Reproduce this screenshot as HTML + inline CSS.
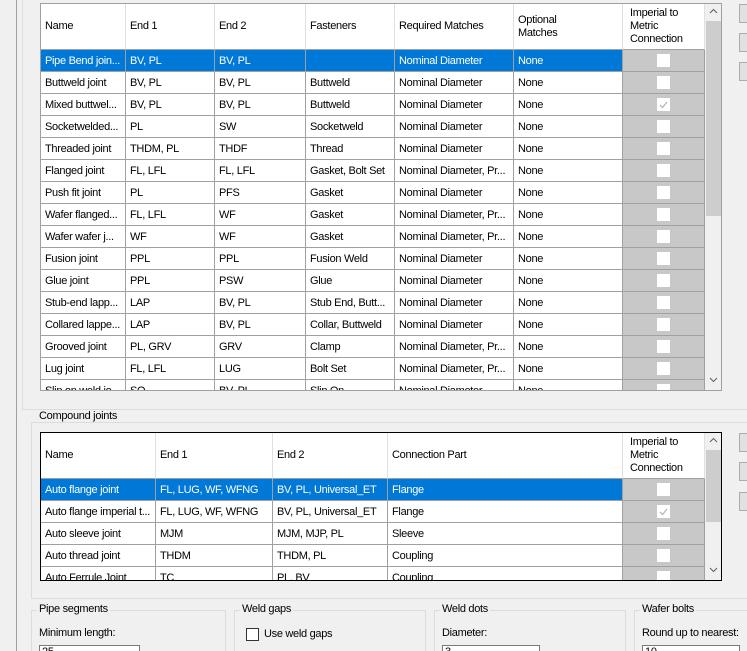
<!DOCTYPE html>
<html><head><meta charset="utf-8"><style>
*{margin:0;padding:0;box-sizing:border-box}
html,body{width:747px;height:651px;overflow:hidden}
body{background:#f0f0f0;font-family:"Liberation Sans",sans-serif;font-size:11px;letter-spacing:-0.3px;color:#000;position:relative}
.a{position:absolute;white-space:nowrap}
.grid{position:absolute;background:#fff;overflow:hidden}
.c{position:absolute;border-right:1px solid #a0a0a0;border-bottom:1px solid #a0a0a0;padding-left:4px;white-space:nowrap;overflow:hidden;display:flex;align-items:center}
.h{border-color:#e0e0e0;border-bottom:1px solid #a0a0a0}
.sel{background:#0078d7;color:#fff}
.g{background:#c8c8c8;justify-content:center;padding:0}
.cb{width:13px;height:13px;background:#fff}
.gb{position:absolute;border:1px solid #dcdcdc}
.lbl{position:absolute;background:#f0f0f0;padding:0 2px;white-space:nowrap}
.btn{position:absolute;left:739px;width:20px;height:19px;border:1px solid #adadad;background:#e1e1e1}
</style></head><body>
<div class="a" style="left:16px;top:0;width:1px;height:651px;background:#a0a0a0"></div>
<div class="gb" style="left:22px;top:-2px;width:740px;height:412px;border-top:none"></div>
<div class="gb" style="left:31px;top:422px;width:740px;height:177px"></div>
<div class="lbl" style="left:37px;top:410px">Compound joints</div>

<div class="btn" style="top:4px"></div><div class="btn" style="top:33px"></div><div class="btn" style="top:62px"></div>
<div class="btn" style="top:433px"></div><div class="btn" style="top:462px"></div><div class="btn" style="top:492px"></div>

<div class="grid" id="g1" style="left:40px;top:3px;width:682px;height:388px;border:1px solid #a0a0a0"></div>
<div class="grid" id="g2" style="left:40px;top:432px;width:682px;height:149px;border:1px solid #000"></div>

<div class="gb" style="left:31px;top:610px;width:195px;height:60px"></div><div class="lbl" style="left:37px;top:603px">Pipe segments</div>
<div class="a" style="left:39px;top:627px">Minimum length:</div>
<div class="a" style="left:39px;top:645px;width:101px;height:20px;background:#fff;border:1px solid #7a7a7a;padding-left:2px">25</div>
<div class="gb" style="left:234px;top:610px;width:192px;height:60px"></div><div class="lbl" style="left:240px;top:603px">Weld gaps</div>
<div class="a" style="left:246px;top:628px;width:13px;height:13px;background:#fff;border:1px solid #333"></div>
<div class="a" style="left:264px;top:628px">Use weld gaps</div>
<div class="gb" style="left:434px;top:610px;width:192px;height:60px"></div><div class="lbl" style="left:440px;top:603px">Weld dots</div>
<div class="a" style="left:442px;top:627px">Diameter:</div>
<div class="a" style="left:442px;top:645px;width:98px;height:20px;background:#fff;border:1px solid #7a7a7a;padding-left:2px">3</div>
<div class="gb" style="left:634px;top:610px;width:192px;height:60px"></div><div class="lbl" style="left:640px;top:603px">Wafer bolts</div>
<div class="a" style="left:642px;top:627px">Round up to nearest:</div>
<div class="a" style="left:642px;top:645px;width:98px;height:20px;background:#fff;border:1px solid #7a7a7a;padding-left:2px">10</div>

<script>
function build(id,cols,headH,hdr,rows,selIdx,thumb,totalH){
 var g=document.getElementById(id),h='';var x=0;
 cols.forEach(function(w,i){
  var last=i==cols.length-1;
  h+='<div class="c h" style="left:'+x+'px;top:0;width:'+w+'px;height:'+headH+'px;'+(last?'padding-left:7px;line-height:13px':'line-height:13px')+'">'+hdr[i]+'</div>';
  rows.forEach(function(r,j){
   var y=headH+j*22;var cls='c';
   if(last)cls+=' g';else if(j==selIdx)cls+=' sel';
   var content=last?'<div class="cb">'+(r[i]?'<svg width="13" height="13"><path d="M3 7l2.5 2.5L10 4" stroke="#b8b8b8" stroke-width="1.3" fill="none"/></svg>':'')+'</div>':r[i];
   h+='<div class="'+cls+'" style="left:'+x+'px;top:'+y+'px;width:'+w+'px;height:22px">'+content+'</div>';
  });
  x+=w;
 });
 h+='<div class="a" style="left:'+x+'px;top:0;width:17px;height:'+totalH+'px;background:#f0f0f0"></div>';
 h+='<div class="a" style="left:'+(x+1)+'px;top:'+thumb[0]+'px;width:15px;height:'+thumb[1]+'px;background:#cdcdcd"></div>';
 h+='<svg class="a" style="left:'+(x+4)+'px;top:4px" width="9" height="8"><path d="M1 5l3.5-3.5L8 5" stroke="#606060" fill="none"/></svg>';
 h+='<svg class="a" style="left:'+(x+4)+'px;top:'+(totalH-14)+'px" width="9" height="8"><path d="M1 2l3.5 3.5L8 2" stroke="#606060" fill="none"/></svg>';
 g.innerHTML=h;
}
var r1=[
["Pipe Bend join...","BV, PL","BV, PL","","Nominal Diameter","None",0],
["Buttweld joint","BV, PL","BV, PL","Buttweld","Nominal Diameter","None",0],
["Mixed buttwel...","BV, PL","BV, PL","Buttweld","Nominal Diameter","None",1],
["Socketwelded...","PL","SW","Socketweld","Nominal Diameter","None",0],
["Threaded joint","THDM, PL","THDF","Thread","Nominal Diameter","None",0],
["Flanged joint","FL, LFL","FL, LFL","Gasket, Bolt Set","Nominal Diameter, Pr...","None",0],
["Push fit joint","PL","PFS","Gasket","Nominal Diameter","None",0],
["Wafer flanged...","FL, LFL","WF","Gasket","Nominal Diameter, Pr...","None",0],
["Wafer wafer j...","WF","WF","Gasket","Nominal Diameter, Pr...","None",0],
["Fusion joint","PPL","PPL","Fusion Weld","Nominal Diameter","None",0],
["Glue joint","PPL","PSW","Glue","Nominal Diameter","None",0],
["Stub-end lapp...","LAP","BV, PL","Stub End, Butt...","Nominal Diameter","None",0],
["Collared lappe...","LAP","BV, PL","Collar, Buttweld","Nominal Diameter","None",0],
["Grooved joint","PL, GRV","GRV","Clamp","Nominal Diameter, Pr...","None",0],
["Lug joint","FL, LFL","LUG","Bolt Set","Nominal Diameter, Pr...","None",0],
["Slip on weld jo...","SO","BV, PL","Slip On","Nominal Diameter","None",0]];
build("g1",[85,89,91,89,119,109,82],46,["Name","End 1","End 2","Fasteners","Required Matches","Optional<br>Matches","Imperial to<br>Metric<br>Connection"],r1,0,[17,195],386);
var r2=[
["Auto flange joint","FL, LUG, WF, WFNG","BV, PL, Universal_ET","Flange",0],
["Auto flange imperial t...","FL, LUG, WF, WFNG","BV, PL, Universal_ET","Flange",1],
["Auto sleeve joint","MJM","MJM, MJP, PL","Sleeve",0],
["Auto thread joint","THDM","THDM, PL","Coupling",0],
["Auto Ferrule Joint","TC","PL, BV","Coupling",0]];
build("g2",[115,117,115,235,82],46,["Name","End 1","End 2","Connection Part","Imperial to<br>Metric<br>Connection"],r2,0,[17,72],147);
</script>
</body></html>
